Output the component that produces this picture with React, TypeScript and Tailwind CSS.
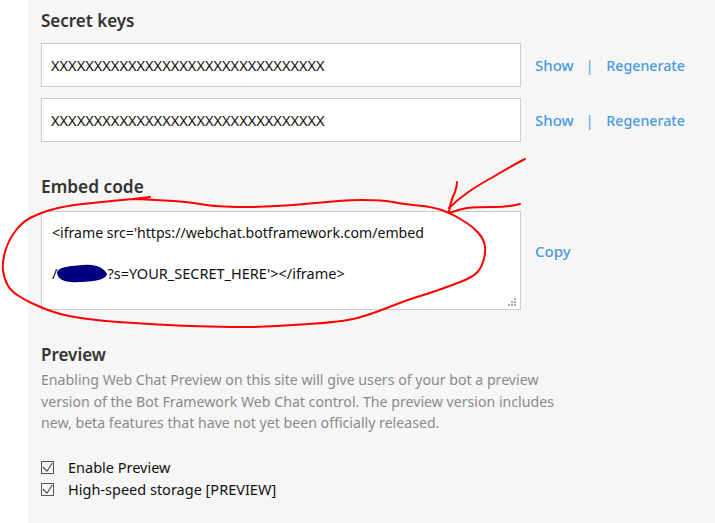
const font = "font-['Noto_Sans','Open_Sans',sans-serif]";

const ring = [
  [150, 197], [133, 199], [100, 202], [65, 206], [40, 213], [22, 222], [8, 241], [2, 263], [4, 278], [10, 290],
  [23, 299], [40, 307], [56, 313], [73, 317], [103, 321], [133, 323], [183, 326], [233, 327], [260, 327],
  [293, 325], [325, 323], [350, 320], [368, 315], [387, 308], [407, 300], [427, 294], [450, 286], [473, 277],
  [482, 267], [486, 250], [483, 238], [473, 227], [462, 220], [450, 213], [433, 207], [403, 204], [388, 201],
  [373, 200], [350, 200], [327, 202], [293, 205], [260, 207], [236, 207], [213, 206], [200, 204], [187, 202],
  [160, 200], [133, 199],
];

// smooth a list of traced points into one path
function smooth(points: number[][]) {
  let d = `M${points[0][0]} ${points[0][1]}`;
  for (let i = 1; i < points.length - 1; i++) {
    const mx = (points[i][0] + points[i + 1][0]) / 2;
    const my = (points[i][1] + points[i + 1][1]) / 2;
    d += ` Q${points[i][0]} ${points[i][1]} ${mx} ${my}`;
  }
  const last = points[points.length - 1];
  return d + ` L${last[0]} ${last[1]}`;
}

function KeyRow() {
  return (
    <div className="flex items-center h-[44px]">
      <div className="w-[480px] h-full bg-white border border-[#cccccc] flex items-center pl-[9px] pt-[1px] text-[14.6px] text-[#111111]">
        XXXXXXXXXXXXXXXXXXXXXXXXXXXXXXXX
      </div>
      <div className="flex items-baseline">
        <a className="ml-[14px] text-[15px] font-medium text-[#4a9be0]">Show</a>
        <span className="ml-[12px] text-[14px] text-[#4a9be0]">|</span>
        <a className="ml-[13px] text-[14.2px] font-medium text-[#4a9be0]">Regenerate</a>
      </div>
    </div>
  );
}

function CheckRow({ label }: { label: string }) {
  return (
    <div className="flex items-center h-[22px] text-[14.5px] text-[#111111]">
      <svg width="13" height="13" viewBox="0 0 13 13" className="mr-[14px] -mt-[1px]">
        <rect x="0.5" y="0.5" width="12" height="12" fill="none" stroke="#555555" />
        <path d="M2 6 L6 10.2 L11.3 2" fill="none" stroke="#444444" strokeWidth="1.1" />
      </svg>
      {label}
    </div>
  );
}

export default function App() {
  return (
    <div className={`relative w-[715px] h-[523px] overflow-hidden bg-white pl-[28px] ${font}`}>
      <div className="h-full bg-[#f6f6f6] pl-[13px]">
        <h2 className="pt-[10px] h-[43px] text-[17px] leading-[22px] font-semibold text-[#333333]">Secret keys</h2>
        <div className="flex flex-col gap-[11px]">
          <KeyRow />
          <KeyRow />
        </div>
        <h2 className="mt-[34px] h-[35px] text-[17.3px] leading-[22px] font-semibold text-[#333333]">Embed code</h2>
        <div className="flex items-start">
          <div className="relative w-[480px] h-[99px] bg-white border border-[#cccccc] pl-[10px] pt-[11px] text-[14.1px] leading-[20px] text-[#111111]">
            <div>{"<iframe src='https://webchat.botframework.com/embed"}</div>
            <div className="mt-[20px] flex text-[14.5px]">
              <span>/</span>
              <span className="w-[50px]" />
              <span>{"?s=YOUR_SECRET_HERE'></iframe>"}</span>
            </div>
            <svg width="9" height="9" viewBox="0 0 9 9" className="absolute right-[3px] bottom-[2px]" fill="#aaaaaa">
              <rect x="6" y="0" width="2" height="2" />
              <rect x="3" y="3" width="2" height="2" />
              <rect x="6" y="3" width="2" height="2" />
              <rect x="0" y="6" width="2" height="2" />
              <rect x="3" y="6" width="2" height="2" />
              <rect x="6" y="6" width="2" height="2" />
            </svg>
          </div>
          <a className="ml-[14px] mt-[29px] text-[15px] font-medium text-[#4a9be0]">Copy</a>
        </div>
        <h2 className="mt-[34px] text-[17px] leading-[22px] font-semibold text-[#333333]">Preview</h2>
        <p className="mt-[3px] w-[530px] text-[14.15px] leading-[21.5px] text-[#8a8a8a]">
          Enabling Web Chat Preview on this site will give users of your bot a preview version of the Bot Framework Web Chat control. The preview version includes new, beta features that have not yet been officially released.
        </p>
        <div className="mt-[23px]">
          <CheckRow label="Enable Preview" />
          <CheckRow label="High-speed storage [PREVIEW]" />
        </div>
      </div>

      {/* hand drawn annotation on top of the screenshot */}
      <svg className="absolute left-0 top-0 pointer-events-none" width="715" height="523" viewBox="0 0 715 523" fill="none">
        <path
          d="M57 272 C60 266 72 266 84 265 C96 264 104 268 107 274 C106 280 92 282 78 282 C66 283 57 280 57 272 Z"
          fill="#000080"
        />
        <g stroke="#ff0000" strokeWidth="2" strokeLinecap="round" strokeLinejoin="round">
          <path d={smooth(ring)} />
          <path d="M525 159 C515 164 503 171 493 177 C484 182 475 187 467 193 C460 198 454 203 449 208" />
          <path d="M457 182 C457 186 456 189 455 192 C452 198 450 205 449 212" />
          <path d="M449 213 C455 211 461 209 467 208 C476 207 485 207 493 207 C503 207 513 206 520 204" />
        </g>
      </svg>
    </div>
  );
}
